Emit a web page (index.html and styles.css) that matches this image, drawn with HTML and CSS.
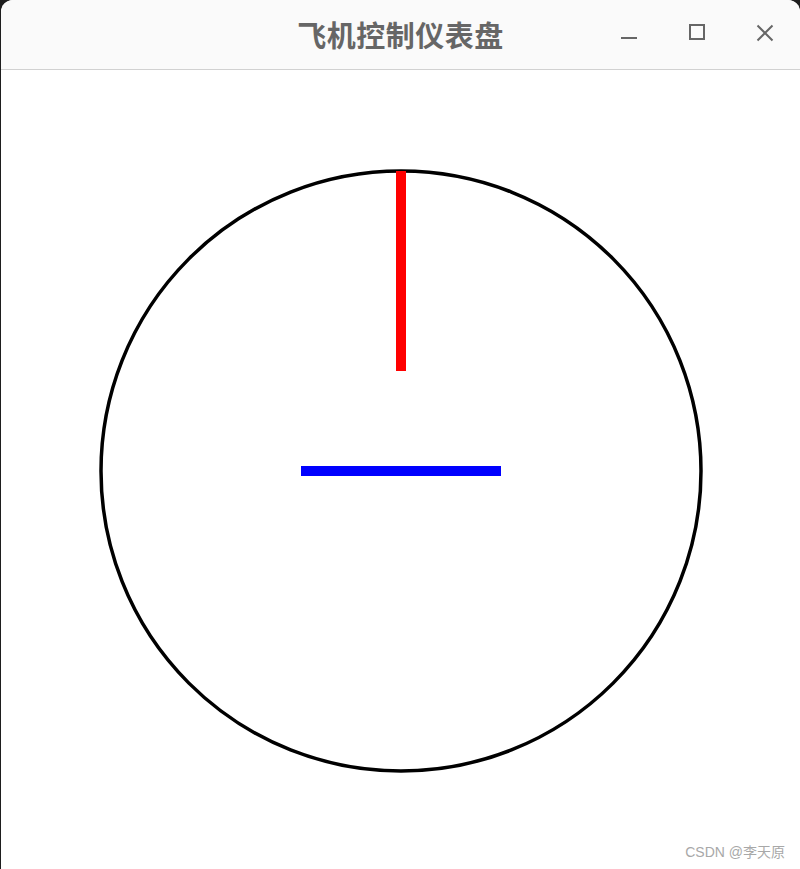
FILE: index.html
```html
<!DOCTYPE html>
<html lang="zh">
<head>
<meta charset="utf-8">
<title>飞机控制仪表盘</title>
<link rel="stylesheet" href="styles.css">
</head>
<body>
<div class="window">
  <header class="titlebar">
    <div class="title">飞机控制仪表盘</div>
    <div class="controls">
      <span class="btn">
        <svg width="18" height="18" viewBox="0 0 18 18"><line x1="1" y1="14" x2="17" y2="14" stroke="#666" stroke-width="2"/></svg>
      </span>
      <span class="btn">
        <svg width="18" height="18" viewBox="0 0 18 18"><rect x="2" y="1" width="14" height="14" fill="none" stroke="#666" stroke-width="2"/></svg>
      </span>
      <span class="btn">
        <svg width="18" height="18" viewBox="0 0 18 18"><path d="M1.5 1.5 L16.5 16.5 M16.5 1.5 L1.5 16.5" stroke="#666" stroke-width="2" fill="none"/></svg>
      </span>
    </div>
  </header>
  <main class="content">
    <svg class="dial" width="799" height="799" viewBox="0 0 799 799">
      <circle cx="400" cy="401" r="300" fill="none" stroke="#000" stroke-width="3.5"/>
      <rect x="395" y="101" width="10" height="200" fill="#ff0000"/>
      <rect x="300" y="396" width="200" height="10" fill="#0000ff"/>
    </svg>
    <div class="watermark">CSDN @李天原</div>
  </main>
</div>
</body>
</html>
```
FILE: styles.css
```css
html, body {
  margin: 0;
  padding: 0;
  background: #1e1e1e;
  width: 800px;
  height: 869px;
  overflow: hidden;
}
.window {
  margin-left: 1px;
  width: 799px;
  height: 869px;
  background: #ffffff;
  border-radius: 12px 12px 0 0;
  overflow: hidden;
  display: flex;
  flex-direction: column;
}
.titlebar {
  position: relative;
  height: 69px;
  flex: 0 0 69px;
  background: #fafafa;
  border-bottom: 1px solid #d1d1d1;
  display: flex;
  align-items: center;
  justify-content: center;
}
.title {
  font-family: "Noto Sans CJK SC", "Noto Sans", sans-serif;
  font-weight: bold;
  font-size: 29px;
  color: #666666;
  letter-spacing: 0.5px;
  margin-top: -2px;
}
.controls {
  position: absolute;
  right: 26px;
  top: 24px;
  display: flex;
  gap: 50px;
}
.btn {
  display: block;
  width: 18px;
  height: 18px;
}
.btn svg {
  display: block;
}
.content {
  position: relative;
  flex: 1;
}
.dial {
  display: block;
}
.watermark {
  position: absolute;
  right: 15px;
  bottom: 8px;
  font-family: "Liberation Sans", "Noto Sans CJK SC", sans-serif;
  font-size: 14px;
  color: #a8a8a8;
}
```
